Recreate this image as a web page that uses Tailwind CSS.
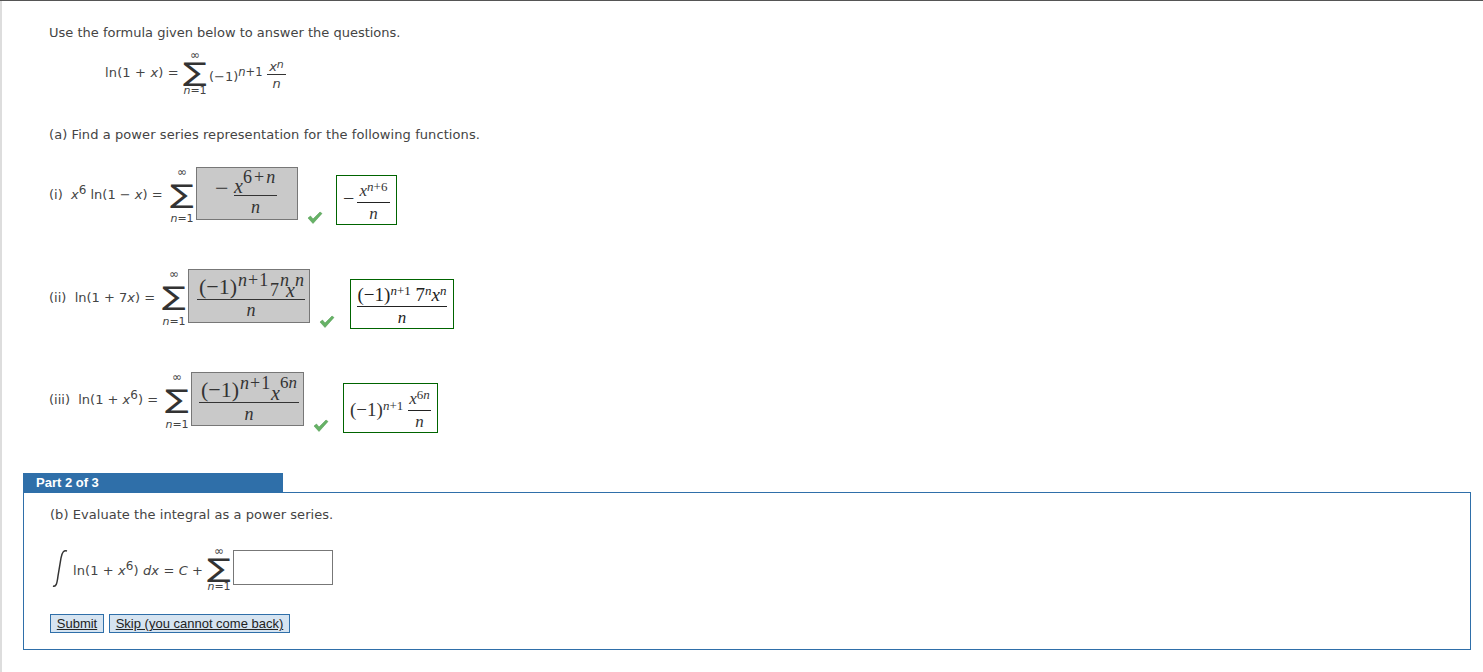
<!DOCTYPE html>
<html lang="en">

<head>
    <meta charset="UTF-8">
    <title>Part 2 of 3</title>
    <script src="https://cdn.jsdelivr.net/npm/@tailwindcss/browser@4"></script>
</head>

<body class="bg-white h-[672px] overflow-hidden font-['DejaVu_Sans',sans-serif] text-[13px] leading-[16px] text-[#444]">
    <div class="h-px bg-[#555]"></div>
    <div class="h-[672px] border-l-2 border-[#ddd] pl-[21px]">
        <!-- clipped title of part 1 -->
        <div class="h-[3px] overflow-hidden relative">
            <div class="absolute left-[13px] -top-[12px] font-['Liberation_Sans',sans-serif] font-bold text-[13px] text-[#333]">Part 1 of 3</div>
        </div>

        <div class="pl-[26px]">
            <p class="mt-[21px]">Use the formula given below to answer the questions.</p>

            <div class="flex items-center h-[56px] mt-[5px] pl-[56px]">
                <span class="w-[79px] whitespace-pre tracking-[0.15px] mb-[2px]">ln(1 + <i>x</i>) =</span>
                <div class="flex flex-col items-center self-start w-[22px] mt-[3px] text-[11px] leading-[12px]">
                    <span class="text-[12px]">∞</span>
                    <span class="h-[24px] -mt-[1px] text-[26px] leading-[24px] scale-x-[1.35] text-[#333]">∑</span>
                    <span class="mt-[1px]"><i>n</i>=1</span>
                </div>
                <span class="ml-[3px] w-[55px] whitespace-pre pt-[5px]">(−1)<sup class="text-[11.500px] leading-none -top-[5px]"><i>n</i>+1</sup></span>
                <div class="ml-[3px] mt-[4px] flex flex-col items-center w-[19px]">
                    <span class="leading-[13px] pb-[1px]"><i>x<sup class="text-[11px] leading-none -top-[3px]">n</sup></i></span>
                    <span class="h-px w-full shrink-0 bg-[#333]"></span>
                    <span class="leading-[18px]"><i>n</i></span>
                </div>
            </div>

            <p class="mt-[25px] tracking-[0.08px]">(a) Find a power series representation for the following functions.</p>

            <!-- (i) -->
            <div class="flex items-start mt-[29px] h-[58px]">
                <span class="mt-[15px] w-[122px] whitespace-pre">(i)  <i>x<sup class="text-[12px] leading-none -top-[5px] not-italic">6</sup></i> ln(1 − <i>x</i>) =</span>
                <div class="flex flex-col items-center w-[22px] -mt-[6px] text-[11px] leading-[12px]">
                    <span class="text-[12px]">∞</span>
                    <span class="h-[24px] mt-[4px] text-[26px] leading-[24px] scale-x-[1.35] text-[#333]">∑</span>
                    <span class="mt-[7px]"><i>n</i>=1</span>
                </div>
                <div class="ml-[3px] w-[102px] h-[53px] -mt-[5px] shrink-0 bg-[#c9c9c9] border border-[#777] flex pl-[18px] font-['Liberation_Serif',serif] text-[#333]">
                    <span class="text-[24px] w-[19px] mt-[12px]">−</span>
                    <div class="flex flex-col items-center w-[43px]">
                        <span class="h-[27px] relative w-full shrink-0">
                            <i class="absolute left-0 top-[8px] text-[20px] leading-none">x</i>
                            <span class="absolute left-[9px] top-0 text-[18px] leading-none tracking-[2px] whitespace-pre">6+<i>n</i></span>
                        </span>
                        <span class="h-px w-full shrink-0 bg-[#333]"></span>
                        <i class="text-[18px] leading-[22px]">n</i>
                    </div>
                </div>
                <svg class="ml-[9px] mt-[39px] shrink-0" width="16" height="13" viewBox="0 0 16 13"><path d="M1 7l2.500-2 2.500 3L13 1l2 1.500L6 12.500z" fill="#66b266" stroke="#4a974a" stroke-width=".5"/></svg>
                <div class="ml-[13px] mt-[3px] w-[61px] h-[50px] shrink-0 border border-[#006400] flex pl-[6px] font-['Liberation_Serif',serif] text-[#333]">
                    <span class="text-[20px] w-[14px] mt-[14px]">−</span>
                    <div class="flex flex-col items-center w-[33px]">
                        <span class="h-[26px] shrink-0 text-[17px] leading-[30px] whitespace-pre"><i>x</i><sup class="text-[13px] leading-none -top-[5px]"><i>n</i>+6</sup></span>
                        <span class="h-px w-full shrink-0 bg-[#222]"></span>
                        <i class="text-[17px] leading-[22px]">n</i>
                    </div>
                </div>
            </div>

            <!-- (ii) -->
            <div class="flex items-start mt-[44px] h-[58px]">
                <span class="mt-[16px] w-[114px] whitespace-pre">(ii)  ln(1 + 7<i>x</i>) =</span>
                <div class="flex flex-col items-center w-[22px] -mt-[6px] text-[11px] leading-[12px]">
                    <span class="text-[12px]">∞</span>
                    <span class="h-[24px] mt-[4px] text-[26px] leading-[24px] scale-x-[1.35] text-[#333]">∑</span>
                    <span class="mt-[8px]"><i>n</i>=1</span>
                </div>
                <div class="ml-[3px] w-[122px] h-[54px] -mt-[5px] shrink-0 bg-[#c9c9c9] border border-[#777] pl-[8px] pt-[2px] font-['Liberation_Serif',serif] text-[#333]">
                    <div class="flex flex-col items-center w-[108px]">
                        <span class="h-[27px] relative w-full shrink-0">
                            <span class="absolute left-[2px] top-[4px] text-[22px] leading-none">(−1)</span>
                            <span class="absolute left-[41px] -top-[1px] text-[18px] leading-none tracking-[1px] whitespace-pre"><i>n</i>+1</span>
                            <span class="absolute left-[73px] top-[9px] text-[18px] leading-none">7</span>
                            <i class="absolute left-[83px] -top-[1px] text-[18px] leading-none">n</i>
                            <i class="absolute left-[89px] top-[8px] text-[20px] leading-none">x</i>
                            <i class="absolute left-[98px] -top-[1px] text-[18px] leading-none">n</i>
                        </span>
                        <span class="h-px w-full shrink-0 bg-[#333]"></span>
                        <i class="text-[18px] leading-[20px]">n</i>
                    </div>
                </div>
                <svg class="ml-[9px] mt-[41px] shrink-0" width="16" height="13" viewBox="0 0 16 13"><path d="M1 7l2.500-2 2.500 3L13 1l2 1.500L6 12.500z" fill="#66b266" stroke="#4a974a" stroke-width=".5"/></svg>
                <div class="ml-[15px] mt-[5px] w-[104px] h-[50px] shrink-0 border border-[#006400] pl-[6px] font-['Liberation_Serif',serif] text-[#222]">
                    <div class="flex flex-col items-center w-[90px]">
                        <span class="h-[26px] shrink-0 text-[19px] leading-[30px] whitespace-pre">(−1)<sup class="text-[13px] leading-none -top-[6px]"><i>n</i>+1</sup> 7<sup class="text-[13px] leading-none -top-[6px]"><i>n</i></sup><i>x</i><sup class="text-[13px] leading-none -top-[6px]"><i>n</i></sup></span>
                        <span class="h-px w-full shrink-0 bg-[#222]"></span>
                        <i class="text-[17px] leading-[22px]">n</i>
                    </div>
                </div>
            </div>

            <!-- (iii) -->
            <div class="flex items-start mt-[45px] h-[58px]">
                <span class="mt-[15px] w-[117px] whitespace-pre">(iii)  ln(1 + <i>x<sup class="text-[12px] leading-none -top-[5px] not-italic">6</sup></i>) =</span>
                <div class="flex flex-col items-center w-[22px] -mt-[6px] text-[11px] leading-[12px]">
                    <span class="text-[12px]">∞</span>
                    <span class="h-[24px] mt-[4px] text-[26px] leading-[24px] scale-x-[1.35] text-[#333]">∑</span>
                    <span class="mt-[8px]"><i>n</i>=1</span>
                </div>
                <div class="ml-[3px] w-[113px] h-[54px] -mt-[5px] shrink-0 bg-[#c9c9c9] border border-[#777] pl-[7px] pt-[2px] font-['Liberation_Serif',serif] text-[#333]">
                    <div class="flex flex-col items-center w-[100px]">
                        <span class="h-[27px] relative w-full shrink-0">
                            <span class="absolute left-[2px] top-[4px] text-[22px] leading-none">(−1)</span>
                            <span class="absolute left-[41px] -top-[1px] text-[18px] leading-none tracking-[1px] whitespace-pre"><i>n</i>+1</span>
                            <i class="absolute left-[72px] top-[8px] text-[20px] leading-none">x</i>
                            <span class="absolute left-[81px] -top-[1px] text-[17px] leading-none">6<i>n</i></span>
                        </span>
                        <span class="h-px w-full shrink-0 bg-[#333]"></span>
                        <i class="text-[18px] leading-[22px]">n</i>
                    </div>
                </div>
                <svg class="ml-[9px] mt-[42px] shrink-0" width="16" height="13" viewBox="0 0 16 13"><path d="M1 7l2.500-2 2.500 3L13 1l2 1.500L6 12.500z" fill="#66b266" stroke="#4a974a" stroke-width=".5"/></svg>
                <div class="ml-[14px] mt-[6px] w-[95px] h-[50px] shrink-0 border border-[#006400] flex pl-[6px] font-['Liberation_Serif',serif] text-[#333]">
                    <span class="whitespace-pre text-[19px] leading-[24px] w-[58px] mt-[14px]">(−1)<sup class="text-[13px] leading-none -top-[6px]"><i>n</i>+1</sup></span>
                    <div class="flex flex-col items-center w-[23px]">
                        <span class="h-[26px] shrink-0 text-[17px] leading-[30px] whitespace-pre"><i>x</i><sup class="text-[13px] leading-none -top-[5px]">6<i>n</i></sup></span>
                        <span class="h-px w-full shrink-0 bg-[#222]"></span>
                        <i class="text-[17px] leading-[22px]">n</i>
                    </div>
                </div>
            </div>
        </div>

        <!-- part 2 -->
        <div class="mt-[38px] w-[260px] h-[19px] bg-[#2f6fa9] text-white font-['Liberation_Sans',sans-serif] font-bold text-[13px] leading-[19px] pl-[13px]">Part 2 of 3</div>
        <div class="w-[1448px] h-[158px] border border-[#2f6fa9] pl-[26px] pt-[14px]">
            <p class="tracking-[0.05px]">(b) Evaluate the integral as a power series.</p>
            <div class="flex items-start mt-[27px] h-[52px]">
                <svg class="shrink-0 -mt-[2px]" width="20" height="40" viewBox="0 0 20 40"><path d="M3 38c3 1 4-2 5-10l3-18c1-6 3-8 6-7" fill="none" stroke="#333" stroke-width="1.500"/></svg>
                <span class="ml-[3px] mt-[13px] w-[135px] whitespace-pre tracking-[0.1px]">ln(1 + <i>x<sup class="text-[12px] leading-none -top-[5px] not-italic">6</sup></i>) <i>dx</i> = <i>C</i> +</span>
                <div class="flex flex-col items-center w-[24px] -ml-[1px] -mt-[5px] text-[11px] leading-[12px]">
                    <span class="text-[12px]">∞</span>
                    <span class="h-[24px] -mt-[1px] text-[26px] leading-[24px] scale-x-[1.35] text-[#333]">∑</span>
                    <span class="mt-[1px]"><i>n</i>=1</span>
                </div>
                <input type="text" class="ml-[2px] w-[100px] h-[35px] border border-[#777] bg-white">
            </div>
            <div class="flex gap-[5px] mt-[12px] font-['Liberation_Sans',sans-serif] text-[13px] leading-[17px] text-[#222]">
                <button class="h-[19px] w-[54px] bg-[#d6e4f1] border border-[#2f6fa9] underline">Submit</button>
                <button class="h-[19px] w-[181px] bg-[#d6e4f1] border border-[#2f6fa9] underline whitespace-pre">Skip (you cannot come back)</button>
            </div>
        </div>
    </div>
</body>

</html>
